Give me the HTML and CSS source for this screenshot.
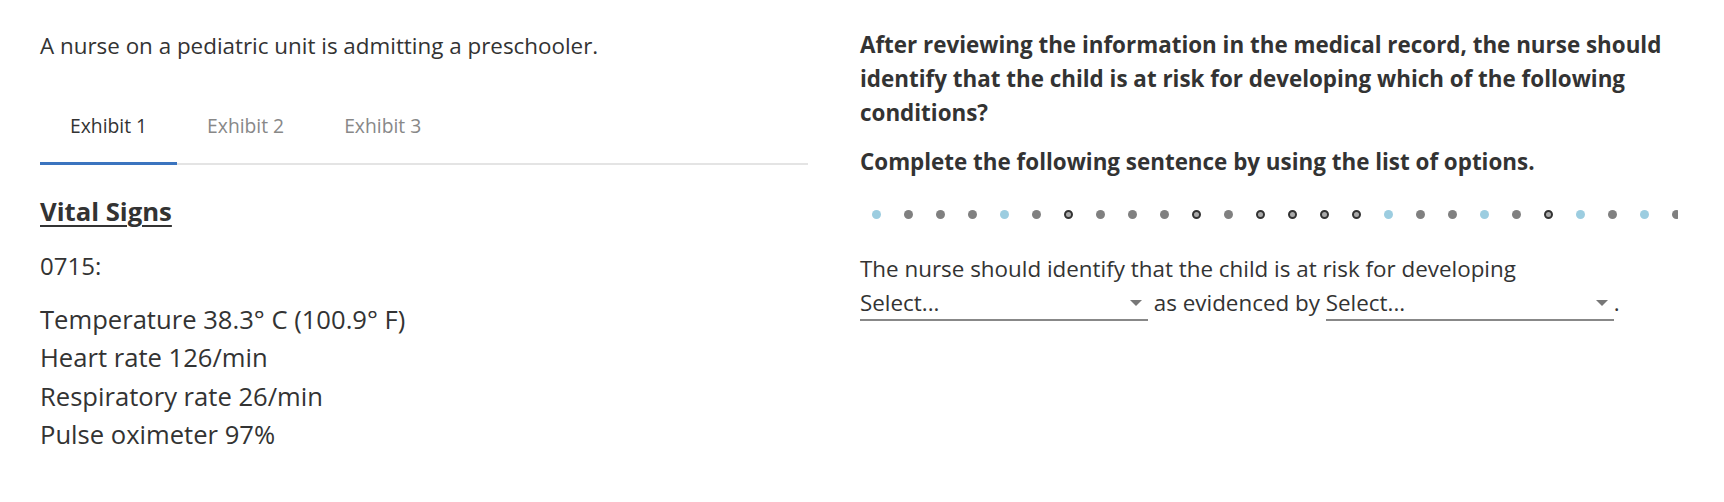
FILE: index.html
```html
<!DOCTYPE html>
<html lang="en">
<head>
    <meta charset="UTF-8">
    <title>Case Study Item</title>
    <link rel="stylesheet" href="styles.css">
</head>
<body>
    <div class="page">
        <div class="case-panel">
            <p class="intro">A nurse on a pediatric unit is admitting a preschooler.</p>
            <div class="tabs">
                <span class="tab active">Exhibit 1</span>
                <span class="tab">Exhibit 2</span>
                <span class="tab">Exhibit 3</span>
            </div>
            <h2 class="exhibit-title">Vital Signs</h2>
            <p class="time">0715:</p>
            <ul class="vitals">
                <li>Temperature 38.3° C (100.9° F)</li>
                <li>Heart rate 126/min</li>
                <li>Respiratory rate 26/min</li>
                <li>Pulse oximeter 97%</li>
            </ul>
        </div>
        <div class="question-panel">
            <p class="question">After reviewing the information in the medical record, the nurse should identify that the child is at risk for developing which of the following conditions?</p>
            <p class="instruction">Complete the following sentence by using the list of options.</p>
            <div class="dots">
                <span class="dot blue"></span>
                <span class="dot"></span>
                <span class="dot"></span>
                <span class="dot"></span>
                <span class="dot blue"></span>
                <span class="dot"></span>
                <span class="dot ring"></span>
                <span class="dot"></span>
                <span class="dot"></span>
                <span class="dot"></span>
                <span class="dot ring"></span>
                <span class="dot"></span>
                <span class="dot ring"></span>
                <span class="dot ring"></span>
                <span class="dot ring"></span>
                <span class="dot ring"></span>
                <span class="dot blue"></span>
                <span class="dot"></span>
                <span class="dot"></span>
                <span class="dot blue"></span>
                <span class="dot"></span>
                <span class="dot ring"></span>
                <span class="dot blue"></span>
                <span class="dot"></span>
                <span class="dot blue"></span>
                <span class="dot"></span>
            </div>
            <p class="sentence">
                The nurse should identify that the child is at risk for developing
                <span class="dropdown">Select...<span class="caret"></span></span> as evidenced by <span class="dropdown">Select...<span class="caret"></span></span>.
            </p>
        </div>
    </div>
</body>
</html>
```

FILE: styles.css
```css
body {
    margin: 0;
    background-color: #fff;
    color: #333;
    font-family: "Open Sans", "Liberation Sans", sans-serif;
}
p, ul, h2 {
    margin: 0;
}
.page {
    display: grid;
    grid-template-columns: 768px 1fr;
    column-gap: 52px;
    padding: 28px 40px 0 40px;
}
.intro {
    font-size: 22.4px;
    line-height: 36px;
}
.tabs {
    display: flex;
    margin-top: 30px;
    border-bottom: 2px solid #e4e4e4;
}
.tab {
    padding: 20px 30px 24px 30px;
    font-size: 19.3px;
    line-height: 24px;
    color: #888;
}
.tab.active {
    color: #333;
    border-bottom: 3px solid #3b74bf;
    margin-bottom: -2px;
}
.exhibit-title {
    margin-top: 31px;
    font-size: 25.7px;
    line-height: 32px;
    font-weight: bold;
    text-decoration: underline;
    text-decoration-thickness: 2px;
    text-underline-offset: 4px;
}
.time {
    margin-top: 19px;
    font-size: 24px;
    line-height: 38.5px;
}
.vitals {
    list-style: none;
    padding: 0;
    margin-top: 15px;
    font-size: 25.6px;
    line-height: 38.5px;
}
.question {
    font-size: 22.4px;
    line-height: 34px;
    font-weight: bold;
}
.instruction {
    margin-top: 15px;
    font-size: 22.4px;
    line-height: 34px;
    font-weight: bold;
}
.dots {
    display: flex;
    width: 818px;
    height: 20px;
    margin-top: 25px;
    overflow: hidden;
}
.dot {
    flex: 0 0 32px;
    display: flex;
    align-items: center;
    justify-content: center;
}
.dot::before {
    content: "";
    width: 9px;
    height: 9px;
    border-radius: 50%;
    background-color: #808080;
    box-sizing: border-box;
}
.dot.blue::before {
    background-color: #9ccde0;
}
.dot.ring::before {
    background-color: #aaa;
    border: 2px solid #333;
}
.sentence {
    margin-top: 28px;
    font-size: 22.4px;
    line-height: 34px;
}
.dropdown {
    display: inline-block;
    position: relative;
    width: 288px;
    line-height: 32px;
    border-bottom: 2px solid #888;
    box-sizing: border-box;
}
.caret {
    position: absolute;
    right: 6px;
    top: 13px;
    width: 0;
    height: 0;
    border-left: 6px solid transparent;
    border-right: 6px solid transparent;
    border-top: 6px solid #777;
}
```
